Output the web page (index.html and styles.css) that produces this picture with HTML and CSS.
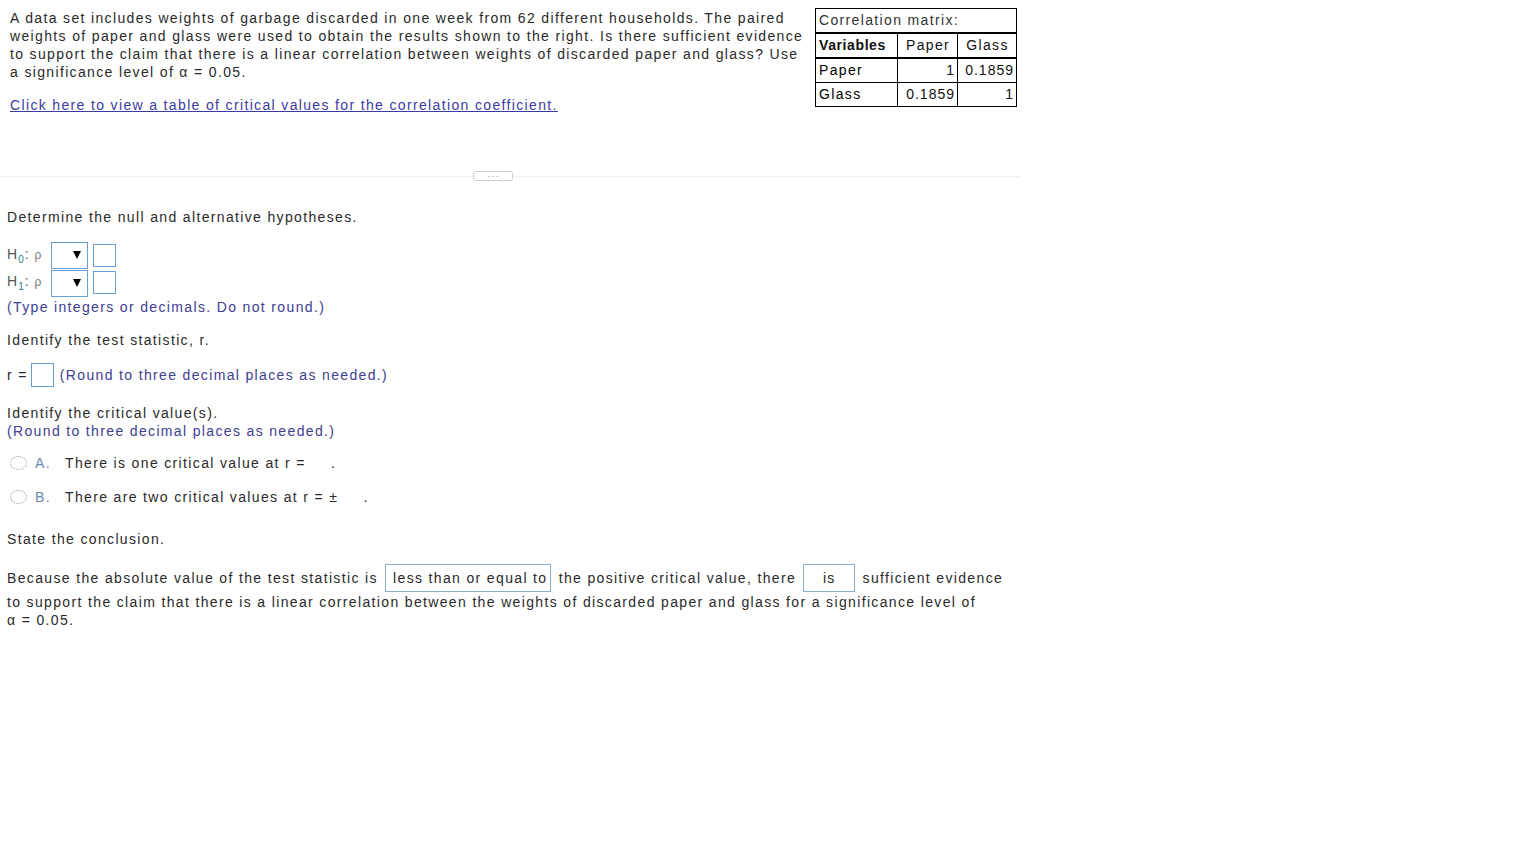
FILE: index.html
```html
<!DOCTYPE html>
<html>
<head>
<meta charset="utf-8">
<link rel="stylesheet" href="styles.css">
</head>
<body>
<div class="page">
  <div class="top">
    <div class="question">
      <p class="qtext">A data set includes weights of garbage discarded in one week from 62 different households. The paired weights of paper and glass were used to obtain the results shown to the right. Is there sufficient evidence to support the claim that there is a linear correlation between weights of discarded paper and glass? Use a significance level of α = 0.05.</p>
      <a class="link" href="#">Click here to view a table of critical values for the correlation coefficient.</a>
    </div>
    <table class="matrix">
      <tr><td colspan="3" class="cap">Correlation matrix:</td></tr>
      <tr class="head"><td class="c1">Variables</td><td class="c2">Paper</td><td class="c3">Glass</td></tr>
      <tr><td class="lbl">Paper</td><td class="num">1</td><td class="num">0.1859</td></tr>
      <tr><td class="lbl">Glass</td><td class="num">0.1859</td><td class="num">1</td></tr>
    </table>
  </div>
  <div class="divider"><span class="more">- - -</span></div>
  <div class="answer">
    <p class="line1">Determine the null and alternative hypotheses.</p>
    <div class="hyp">
      <div class="hrow"><span class="hl">H<sub>0</sub>: <span class="rho">ρ</span></span><span class="sel"><span class="tri"></span></span><span class="box"></span></div>
      <div class="hrow"><span class="hl">H<sub>1</sub>: <span class="rho">ρ</span></span><span class="sel"><span class="tri"></span></span><span class="box"></span></div>
    </div>
    <p class="note tnote">(Type integers or decimals. Do not round.)</p>
    <p class="sect">Identify the test statistic, r.</p>
    <p class="rrow">r = <span class="box rbox"></span><span class="note">(Round to three decimal places as needed.)</span></p>
    <p class="sect crit">Identify the critical value(s).<br><span class="note">(Round to three decimal places as needed.)</span></p>
    <div class="opt"><span class="radio"></span><span class="lab">A.</span><span class="otext">There is one critical value at r = <span class="gap"></span>.</span></div>
    <div class="opt"><span class="radio"></span><span class="lab">B.</span><span class="otext">There are two critical values at r = ± <span class="gap"></span>.</span></div>
    <p class="sect conc">State the conclusion.</p>
    <p class="concl">Because the absolute value of the test statistic is <span class="ans">less than or equal to</span> the positive critical value, there <span class="ans isbox">is</span> sufficient evidence to support the claim that there is a linear correlation between the weights of discarded paper and glass for a significance level of <span class="nw">α = 0.05.</span></p>
  </div>
</div>
</body>
</html>
```
FILE: styles.css
```css
html, body { margin: 0; padding: 0; background: #fff; }
body {
  font-family: "Liberation Sans", Arial, sans-serif;
  font-size: 14px;
  letter-spacing: 1.35px;
  color: #2a2a2a;
}
p { margin: 0; }
.page { width: 1020px; }
.top { display: flex; align-items: flex-start; padding: 9px 0 0 10px; height: 160px; box-sizing: border-box; }
.question { width: 805px; }
.qtext { line-height: 18px; width: 798px; }
.link { display: inline-block; margin-top: 16px; color: #3b3ba6; text-decoration: underline; }
.matrix { border-collapse: collapse; margin-top: -1px; border: 1px solid #000; color: #111; }
.matrix td { border: 1px solid #000; padding: 0 2px 0 3px; height: 23px; line-height: 23px; }
.matrix .cap { border-bottom: 2px solid #000; color: #333; }
.matrix .head td { border-bottom: 2px solid #000; }
.matrix .c1 { width: 76px; font-weight: bold; letter-spacing: 0.6px; }
.matrix .c2 { width: 54px; text-align: center; }
.matrix .c3 { width: 53px; text-align: center; }
.matrix .lbl { color: #000; }
.matrix .num { text-align: right; padding-right: 2px; letter-spacing: 1px; }
.divider { position: relative; height: 1px; background: #eef0f2; margin-top: 16px; }
.more { position: absolute; left: 473px; top: -5px; width: 38px; height: 8px; border: 1px solid #ccc; border-radius: 3px; background: #fff; font-size: 7px; line-height: 8px; text-align: center; color: #999; letter-spacing: 0; }
.answer { padding: 31px 0 0 7px; }
.line1 { line-height: 18px; }
.hyp { margin-top: 16px; }
.hrow { display: flex; align-items: center; height: 27px; }
.hl { width: 44px; color: #555; letter-spacing: 1px; }
.hl sub { font-size: 10px; color: #2a7a8a; }
.rho { font-size: 12px; color: #777; }
.sel { width: 37px; height: 27px; border: 1px solid #6da0d0; box-sizing: border-box; position: relative; }
.hrow + .hrow .sel { margin-top: 1px; }
.tri { position: absolute; right: 6px; top: 8px; border-left: 4px solid transparent; border-right: 4px solid transparent; border-top: 8px solid #000; }
.box { display: inline-block; width: 23px; height: 23px; border: 1px solid #6da0d0; box-sizing: border-box; margin-left: 5px; }
.note { color: #404090; }
.tnote { line-height: 18px; margin-top: 2px; }
.sect { margin-top: 15px; line-height: 18px; }
.rrow { margin-top: 14px; display: flex; align-items: center; line-height: 24px; }
.rbox { margin-left: 3px; margin-right: 6px; width: 23px; height: 24px; }
.crit { margin-top: 17px; }
.opt { display: flex; align-items: center; margin-top: 14px; line-height: 18px; }
.opt + .opt { margin-top: 16px; }
.radio { width: 15px; height: 12px; border: 1px dotted #999; border-radius: 50%; margin-left: 3px; }
.lab { color: #6a8ab5; margin-left: 8px; width: 30px; }
.gap { display: inline-block; width: 20px; }
.conc { margin-top: 24px; }
.concl { margin-top: 16px; line-height: 18px; width: 1005px; }
.ans { display: inline-block; border: 1px solid #8ab0c8; padding: 4px 3px 4px 7px; line-height: 18px; margin: 0 2px 1px; }
.isbox { width: 52px; padding-left: 0; padding-right: 0; text-align: center; box-sizing: border-box; }
.nw { white-space: nowrap; }
```
